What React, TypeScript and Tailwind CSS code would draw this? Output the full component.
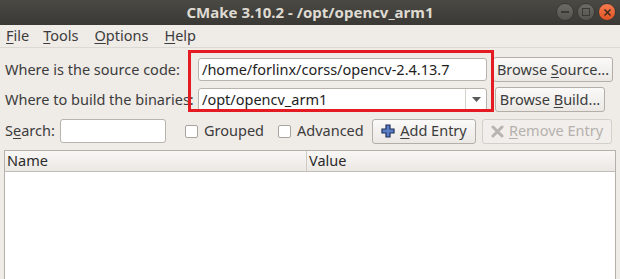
import React from "react";

const font = { fontFamily: "'Noto Sans', 'DejaVu Sans', sans-serif" };

function U({ children }: { children: React.ReactNode }) {
  return <span className="underline decoration-1 underline-offset-2">{children}</span>;
}

function Button({ children, className = "", disabled = false }: { children: React.ReactNode; className?: string; disabled?: boolean }) {
  return (
    <div
      className={
        "flex items-center justify-center h-[25px] rounded-[3px] border text-[14.5px] whitespace-nowrap " +
        (disabled
          ? "border-[#d3cfca] bg-[#f1eeeb] text-[#b5b1ac] "
          : "border-[#b3aea8] bg-gradient-to-b from-[#fbfaf9] to-[#ebe8e4] text-[#3c3c3c] ") +
        className
      }
    >
      {children}
    </div>
  );
}

function Checkbox({ label }: { label: string }) {
  return (
    <div className="flex items-center gap-[6px]">
      <div className="w-[13px] h-[13px] bg-white border border-[#a9a49e] rounded-[2px]" />
      <span className="text-[14.5px] text-[#3c3c3c]">{label}</span>
    </div>
  );
}

export default function App() {
  return (
    <div className="w-[620px] h-[279px] overflow-hidden bg-[#efebe7] relative" style={font}>
      {/* title bar */}
      <div className="h-[25px] bg-gradient-to-b from-[#4a4944] to-[#3a3935] flex items-center relative">
        <div className="flex-1 text-center text-[15px] font-bold text-[#dfdbd2] leading-none">
          CMake 3.10.2 - /opt/opencv_arm1
        </div>
        <div className="absolute right-[4px] top-[3px] flex gap-[3px]">
          <div className="w-[18px] h-[18px] rounded-full bg-gradient-to-b from-[#6d6b65] to-[#55534e] border border-[#3a3935] flex items-center justify-center">
            <div className="w-[8px] h-[2px] bg-[#3a3935]" />
          </div>
          <div className="w-[18px] h-[18px] rounded-full bg-gradient-to-b from-[#6d6b65] to-[#55534e] border border-[#3a3935] flex items-center justify-center">
            <div className="w-[8px] h-[8px] border-[1.5px] border-[#3a3935]" />
          </div>
          <div className="w-[18px] h-[18px] rounded-full bg-gradient-to-b from-[#f47a4e] to-[#e05320] border border-[#3a3935] flex items-center justify-center">
            <svg width="9" height="9" viewBox="0 0 9 9">
              <path d="M1.5 1.5 L7.5 7.5 M7.5 1.5 L1.5 7.5" stroke="#3a2a20" strokeWidth="1.5" />
            </svg>
          </div>
        </div>
      </div>

      {/* menu bar */}
      <div className="h-[23px] flex items-center border-b border-[#dcd8d3] text-[14.5px] text-[#3c3c3c]">
        <span className="ml-[6px]"><U>F</U>ile</span>
        <span className="ml-[14px]"><U>T</U>ools</span>
        <span className="ml-[16px]"><U>O</U>ptions</span>
        <span className="ml-[16px]"><U>H</U>elp</span>
      </div>

      {/* source row */}
      <div className="flex items-center h-[25px] mt-[9px] pl-[5px] pr-[7px]">
        <div className="w-[193px] text-[14.5px] text-[#3c3c3c] whitespace-nowrap">Where is the source code:</div>
        <div className="w-[289px] h-[23px] bg-white border border-[#b8b3ad] rounded-[3px] flex items-center px-[3px] text-[14.5px] text-[#1e1e1e]">
          /home/forlinx/corss/opencv-2.4.13.7
        </div>
        <Button className="ml-[6px] w-[120px]">
          <span>Browse <U>S</U>ource...</span>
        </Button>
      </div>

      {/* build row */}
      <div className="flex items-center h-[25px] mt-[5px] pl-[5px] pr-[7px]">
        <div className="w-[193px] text-[14.5px] text-[#3c3c3c] whitespace-nowrap">Where to build the binaries:</div>
        <div className="w-[289px] h-[23px] bg-white border border-[#b8b3ad] rounded-[3px] flex items-center text-[14.5px] text-[#1e1e1e]">
          <div className="flex-1 px-[3px]">/opt/opencv_arm1</div>
          <div className="w-[21px] h-full border-l border-[#d4d0cb] flex items-center justify-center">
            <svg width="9" height="5" viewBox="0 0 9 5">
              <path d="M0 0 H9 L4.5 5 Z" fill="#5a5a5a" />
            </svg>
          </div>
        </div>
        <div className="flex-1 flex justify-center">
          <Button className="w-[110px]">
            <span>Browse <U>B</U>uild...</span>
          </Button>
        </div>
      </div>

      {/* search row */}
      <div className="flex items-center h-[24px] mt-[7px] pl-[5px] pr-[8px]">
        <span className="w-[55px] text-[14.5px] text-[#3c3c3c]">S<U>e</U>arch:</span>
        <div className="w-[106px] h-[24px] bg-white border border-[#b8b3ad] rounded-[3px]" />
        <div className="ml-[19px] flex items-center gap-[14px]">
          <Checkbox label="Grouped" />
          <Checkbox label="Advanced" />
        </div>
        <Button className="ml-auto w-[104px]">
          <svg width="14" height="14" viewBox="0 0 14 14" className="mr-[5px]">
            <path d="M5 1 H9 V5 H13 V9 H9 V13 H5 V9 H1 V5 H5 Z" fill="#5a7fc7" stroke="#1f2f5a" strokeWidth="1.2" />
          </svg>
          <span><U>A</U>dd Entry</span>
        </Button>
        <Button disabled className="ml-[6px] w-[130px]">
          <svg width="13" height="13" viewBox="0 0 13 13" className="mr-[5px]">
            <path d="M2 2 L11 11 M11 2 L2 11" stroke="#b8b4af" strokeWidth="3" strokeLinecap="round" />
          </svg>
          <span><U>R</U>emove Entry</span>
        </Button>
      </div>

      {/* table */}
      <div className="mt-[7px] mx-[4px] h-[140px] border border-[#b5b0aa] bg-white">
        <div className="flex h-[21px] bg-gradient-to-b from-[#f9f7f5] to-[#ebe8e4] border-b border-[#c2bdb7] text-[14.5px] text-[#2a2a2a]">
          <div className="w-[302px] border-r border-[#cfcac4] px-[2px] flex items-center">Name</div>
          <div className="flex-1 px-[2px] flex items-center">Value</div>
        </div>
      </div>

      {/* annotation box */}
      <div className="absolute left-[188px] top-[50px] w-[306px] h-[62px] border-[3px] border-[#e41b23] pointer-events-none" />
    </div>
  );
}
